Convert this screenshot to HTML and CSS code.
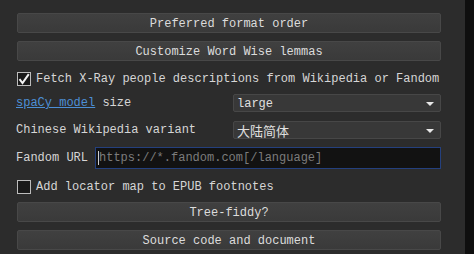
FILE: index.html
```html
<!DOCTYPE html>
<html>
<head>
<meta charset="utf-8">
<link rel="stylesheet" href="styles.css">
</head>
<body>
<div class="panel">
  <div class="btn b1">Preferred format order</div>
  <div class="btn b2">Customize Word Wise lemmas</div>
  <div class="chkrow r3">
    <span class="box checked"><svg width="12" height="12" viewBox="0 0 12 12"><path d="M1.5 6.2 L4.5 10 L10.8 1.2" fill="none" stroke="#f2f2f2" stroke-width="2"/></svg></span>
    <span>Fetch X-Ray people descriptions from Wikipedia or Fandom</span>
  </div>
  <div class="row r4">
    <span><a class="link">spaCy model</a> size</span>
    <div class="combo"><span>large</span><span class="arrow"></span></div>
  </div>
  <div class="row r5">
    <span>Chinese Wikipedia variant</span>
    <div class="combo"><span class="cjk">大陆简体</span><span class="arrow"></span></div>
  </div>
  <div class="row r6">
    <span>Fandom URL</span>
    <div class="input"><span class="caret"></span><span class="ph">https://*.fandom.com[/language]</span></div>
  </div>
  <div class="chkrow r7">
    <span class="box"></span>
    <span>Add locator map to EPUB footnotes</span>
  </div>
  <div class="btn b8">Tree-fiddy?</div>
  <div class="btn b9">Source code and document</div>
</div>
</body>
</html>
```
FILE: styles.css
```css
html, body {
  margin: 0;
  padding: 0;
  background: #0f0f0f;
  width: 474px;
  height: 254px;
  overflow: hidden;
}
.panel {
  width: 465px;
  height: 254px;
  box-sizing: border-box;
  background: #2c2c2c;
  padding: 0 24px 0 17px;
  display: flex;
  flex-direction: column;
  font-family: "Liberation Mono", "DejaVu Sans Mono", monospace;
  font-size: 12px;
  color: #d6d6d6;
}
.btn {
  height: 20px;
  box-sizing: border-box;
  border: 1px solid #484848;
  border-radius: 2px;
  background: linear-gradient(#404040, #3a3a3a);
  display: flex;
  align-items: center;
  justify-content: center;
  padding-top: 2px;
  color: #dcdcdc;
}
.b1 { margin-top: 13px; }
.b2 { margin-top: 8px; }
.b8 { margin-top: 7px; }
.b9 { margin-top: 8px; }
.chkrow {
  display: flex;
  align-items: center;
  gap: 5px;
  height: 18px;
}
.r3 { margin-top: 9px; }
.r7 { margin-top: 9px; height: 17px; }
.box {
  width: 14px;
  height: 14px;
  box-sizing: border-box;
  border: 1px solid #bdbdbd;
  background: #1a1a1a;
  display: flex;
  align-items: center;
  justify-content: center;
}
.row {
  display: flex;
  align-items: center;
  justify-content: space-between;
  margin-left: -1px;
}
.r4 { margin-top: 6px; height: 18px; }
.r5 { margin-top: 9px; height: 18px; }
.r6 { margin-top: 8px; height: 22px; }
.link {
  color: #4c8fd6;
  text-decoration: underline;
}
.combo {
  width: 208px;
  height: 18px;
  box-sizing: border-box;
  border: 1px solid #474747;
  border-radius: 2px;
  background: #383838;
  display: flex;
  align-items: center;
  justify-content: space-between;
  padding: 1px 6px 0 3px;
  color: #e0e0e0;
}
.cjk {
  font-family: "Noto Sans CJK SC", sans-serif;
  font-size: 13px;
  line-height: 16px;
}
.arrow {
  width: 0;
  height: 0;
  border-left: 4px solid transparent;
  border-right: 4px solid transparent;
  border-top: 4px solid #e8e8e8;
}
.input {
  width: 346px;
  height: 22px;
  box-sizing: border-box;
  border: 1px solid #24407e;
  background: #121212;
  display: flex;
  align-items: center;
  padding-left: 2px;
}
.caret {
  width: 1px;
  height: 14px;
  background: #cfcfcf;
}
.ph {
  color: #7c7c7c;
}
```
